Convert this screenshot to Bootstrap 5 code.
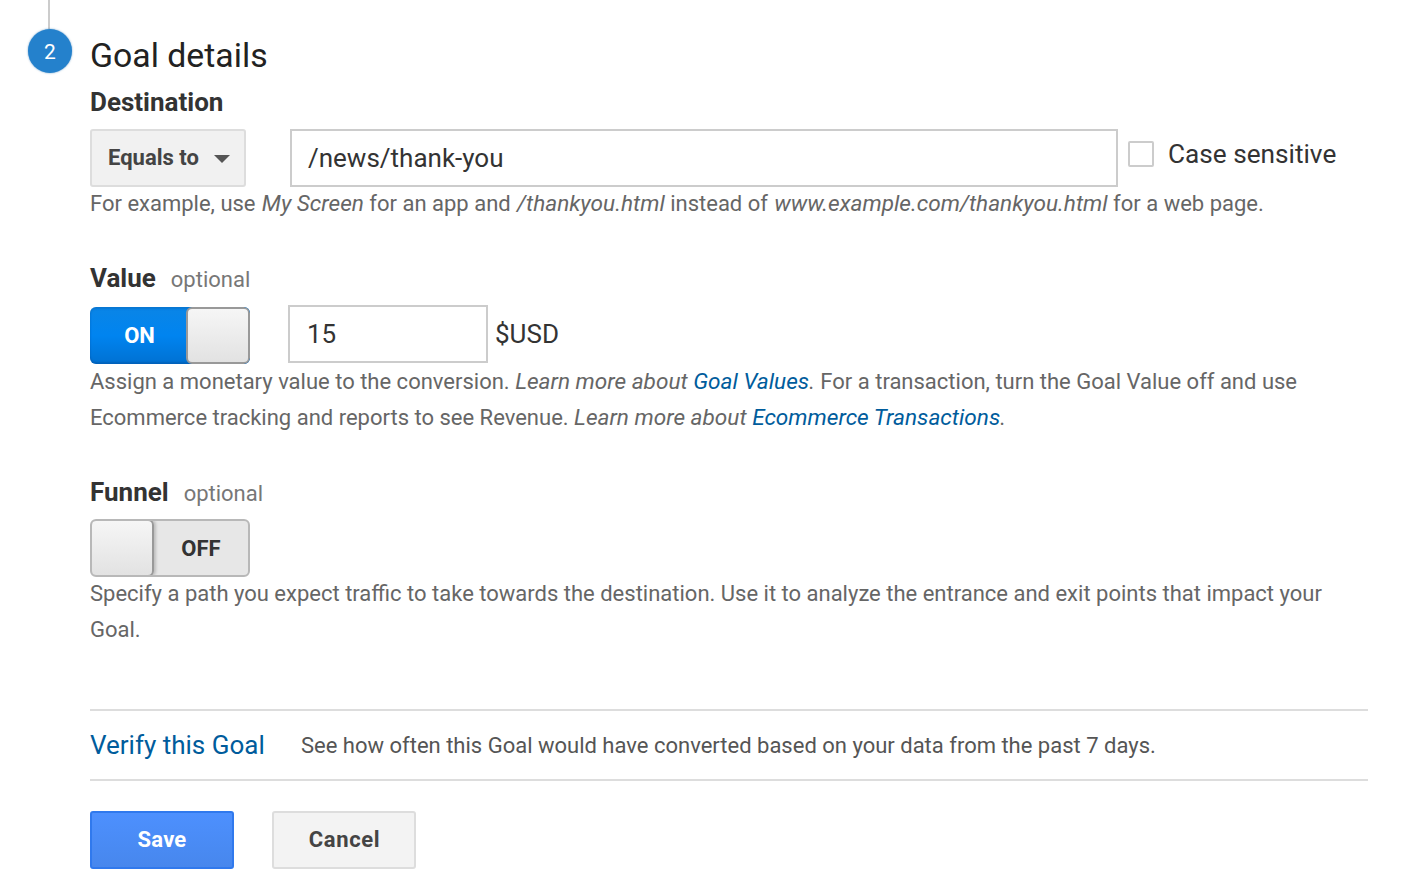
<!DOCTYPE html>
<html lang="en">
<head>
<meta charset="utf-8">
<title>Goal details</title>
<link rel="stylesheet" href="https://cdn.jsdelivr.net/npm/bootstrap@5.3.0/dist/css/bootstrap.min.css">
<style>
html,body{height:888px;overflow:hidden;background:#fff}
body{font-family:Roboto,"Liberation Sans",sans-serif;color:#333;font-size:22px}
.shell{padding-right:43px}
.rail{width:90px;padding-left:28px;flex:none}
.rail-line{width:2px;height:29px;background:#ccc;margin-left:20px}
.step-dot{width:44px;height:44px;border-radius:50%;background:#2481cc;color:#fff;font-size:21px;line-height:46px;text-align:center;box-shadow:0 0 2px rgba(26,107,176,.7)}
.main-col{min-width:0;flex:1}
.goal-title{font-size:33.8px;font-weight:400;color:#222;line-height:38px;margin:37px 0 0}
.field-label{font-size:26px;font-weight:700;color:#333;line-height:32px;margin:0}
.dest-label{margin:11px 0 11px}
.val-label{margin-bottom:11px}
.fun-label{margin-bottom:9px}
.opt-note{font-size:22px;font-weight:400;color:#777;margin-left:15px}
.sel-btn{width:156px;height:58px;background:#f1f1f1;border:2px solid #ddd;border-radius:3px;font-size:22px;font-weight:700;color:#444;padding:0 0 2px 16px;justify-content:flex-start}
.caret-tri{width:0;height:0;border-left:8px solid transparent;border-right:8px solid transparent;border-top:8px solid #555;margin-left:15px;margin-top:4px}
.txt-field{height:58px;border:2px solid #ccc;background:#fff;padding:0 16px;font-size:26px;color:#333;line-height:54px}
.dest-field{width:828px;margin-left:44px}
.case-box{width:26px;height:26px;border:2px solid #ccc;border-radius:2px;margin-left:10px;flex:none}
.case-label{font-size:26.2px;color:#333;margin-left:14px;line-height:32px}
.case-wrap{height:50px}
.help-line{color:#666;line-height:36px;font-size:22px;margin:0}
.help-line em{font-size:22.6px;line-height:0}
.help-line a{color:#005c9c;text-decoration:none}
.help-dest{margin-top:-1px}
.help-dest em{margin-left:.8px}
.help-val{margin-top:0}
.help-fun{margin-top:-1px}
.sw-track{width:160px;height:57px;border-radius:6px;overflow:hidden;font-size:22px;font-weight:700}
.sw-on{background:linear-gradient(#0a85e6,#0084f0 50%,#0071d2);color:#fff;box-shadow:inset 0 -2px 2px rgba(0,60,130,.3),inset 0 2px 2px rgba(0,60,130,.2)}
.sw-off{height:58px;background:#e7e7e7;border:2px solid #b8b8b8;color:#333}
.sw-text{height:100%;align-items:center;justify-content:center}
.sw-on .sw-text{padding-left:3px}
.sw-knob{background:linear-gradient(#f6f6f6,#e2e2e2);border:2px solid #999;border-radius:6px;flex:none}
.sw-on .sw-knob{width:64px;height:57px}
.sw-off .sw-knob{width:64px;height:58px;margin:-2px 0 -2px -2px;box-shadow:2px 0 3px rgba(0,0,0,.18)}
.value-field{width:200px;margin-left:38px;margin-top:-2px;padding:0 17px}
.usd-label{font-size:26px;margin-left:7px;color:#333;height:58px;line-height:58px;margin-top:-2px}
.block-value{margin-top:40px}
.block-funnel{margin-top:40px}
.verify-row{border-top:2px solid #ddd;border-bottom:2px solid #ddd;height:72px;margin-top:61px}
.verify-link{font-size:26px;color:#005c9c;text-decoration:none;width:211px;flex:none}
.verify-note{font-size:22px;color:#555}
.act-btn{width:144px;height:58px;border-radius:3px;font-size:22px;font-weight:700;padding:0 0 2px;letter-spacing:.6px}
.act-save{background:linear-gradient(#4d90fe,#4787ed);border:2px solid #3079ed;color:#fff;letter-spacing:.2px}
.act-cancel{background:#f3f3f3;border:2px solid #ddd;color:#444;margin-left:38px;padding-left:1px}
.act-row{margin-top:30px}
</style>
</head>
<body>
<div class="shell d-flex">
  <div class="rail">
    <div class="rail-line"></div>
    <div class="step-dot">2</div>
  </div>
  <div class="main-col">
    <h2 class="goal-title">Goal details</h2>
    <p class="field-label dest-label">Destination</p>
    <div class="d-flex align-items-start">
      <button type="button" class="btn sel-btn d-flex align-items-center">Equals to<span class="caret-tri"></span></button>
      <div class="txt-field dest-field">/news/thank-you</div>
      <div class="d-flex align-items-center case-wrap">
        <span class="case-box"></span>
        <span class="case-label">Case sensitive</span>
      </div>
    </div>
    <p class="help-line help-dest">For example, use <em>My Screen</em> for an app and <em>/thankyou.html</em> instead of <em>www.example.com/thankyou.html</em> for a web page.</p>

    <div class="block-value">
      <p class="field-label val-label">Value<span class="opt-note">optional</span></p>
      <div class="d-flex align-items-start">
        <div class="sw-track sw-on d-flex">
          <div class="sw-text d-flex flex-grow-1">ON</div>
          <div class="sw-knob"></div>
        </div>
        <div class="txt-field value-field">15</div>
        <div class="usd-label">$USD</div>
      </div>
      <p class="help-line help-val"><span class="d-block">Assign a monetary value to the conversion. <em>Learn more about <a href="#">Goal Values</a>.</em> For a transaction, turn the Goal Value off and use</span><span class="d-block">Ecommerce tracking and reports to see Revenue. <em>Learn more about <a href="#">Ecommerce Transactions</a>.</em></span></p>
    </div>

    <div class="block-funnel">
      <p class="field-label fun-label">Funnel<span class="opt-note">optional</span></p>
      <div class="sw-track sw-off d-flex">
        <div class="sw-knob"></div>
        <div class="sw-text d-flex flex-grow-1">OFF</div>
      </div>
      <p class="help-line help-fun">Specify a path you expect traffic to take towards the destination. Use it to analyze the entrance and exit points that impact your Goal.</p>
    </div>

    <div class="verify-row d-flex align-items-center">
      <a class="verify-link" href="#">Verify this Goal</a>
      <span class="verify-note">See how often this Goal would have converted based on your data from the past 7 days.</span>
    </div>
    <div class="act-row d-flex">
      <button type="button" class="btn act-btn act-save">Save</button>
      <button type="button" class="btn act-btn act-cancel">Cancel</button>
    </div>
  </div>
</div>
<script src="https://cdn.jsdelivr.net/npm/bootstrap@5.3.0/dist/js/bootstrap.bundle.min.js"></script>
</body>
</html>
